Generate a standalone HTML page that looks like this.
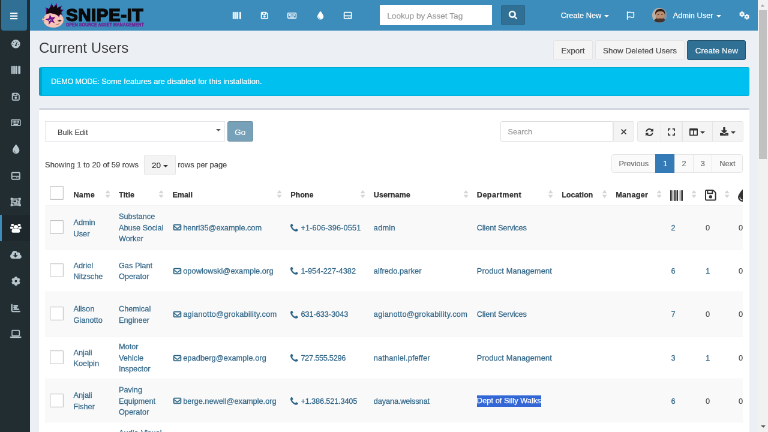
<!DOCTYPE html>
<html lang="en"><head><meta charset="utf-8"><title>Users :: Snipe-IT</title>
<style>
*{box-sizing:border-box}
html,body{margin:0;padding:0;overflow:hidden}
body{width:768px;height:432px;overflow:hidden;background:#ecf0f5;font-family:"Liberation Sans",sans-serif;}
#app{position:absolute;left:0;top:0;width:1280px;height:720px;transform:scale(.6);transform-origin:0 0;will-change:transform;overflow:hidden;background:#ecf0f5;color:#464646;font-size:12.8px;line-height:20px}
.abs{position:absolute}
.ai{position:absolute;display:block;line-height:0}
.ai svg,.ii svg{display:block}
.ii{display:inline-block;line-height:0;vertical-align:middle}
a{color:#296282;text-decoration:none}
/* sidebar */
#sidebar{position:absolute;left:0;top:0;width:50px;height:720px;background:#222d32;color:#b8c7ce}
#sidebar .active{position:absolute;left:0;top:358px;width:50px;height:44px;background:#1e282c;border-left:3px solid #3c8dbc}
#burger{position:absolute;left:1.8px;top:-3px;width:43px;height:54.3px;background:#307095;border-radius:4px;color:#f4f8fa}
/* navbar */
#navbar{position:absolute;left:50px;top:0;width:1213px;height:51px;background:#3c8dbc;color:#fff}
#logo{position:absolute;left:16.67px;top:0}
#lt1{left:60px;top:10.3px;font-size:29.5px;line-height:30px;font-weight:700;color:#0a0a0a;letter-spacing:.55px;white-space:nowrap;-webkit-text-stroke:1.7px #0a0a0a;paint-order:stroke fill}
#lt2{left:60px;top:36.4px;font-size:8.7px;line-height:10px;font-weight:700;color:#741a92;white-space:nowrap;transform:scaleX(.806);transform-origin:0 0;-webkit-text-stroke:.3px #741a92}
#lookup{position:absolute;left:582.7px;top:8px;width:187.5px;height:34px;background:#fff;color:#999;padding:0 0 0 12.5px;line-height:37px;font-size:13.7px;white-space:nowrap}
#lookbtn{position:absolute;left:784.5px;top:7.5px;width:40.5px;height:34px;background:#307095;border:1px solid #2a6487;border-radius:3px;color:#fff}
.navtxt{position:absolute;top:0;height:51px;line-height:52px;color:#fff;font-size:12.8px;white-space:nowrap;-webkit-text-stroke:.25px #fff}
.caret{display:inline-block;width:0;height:0;border-left:4px solid transparent;border-right:4px solid transparent;border-top:4px solid currentColor;vertical-align:middle;margin-left:5px}
#avatar{position:absolute;left:1036.6px;top:13.2px;width:24.6px;height:24.6px;border-radius:50%;overflow:hidden}
/* scrollbar */
#sb{position:absolute;left:1263.3px;top:0;width:16.7px;height:720px;background:#f1f1f1}
#sb .thumb{position:absolute;left:2px;top:17px;width:13px;height:247.5px;background:#c1c1c1}
#sb .up{position:absolute;left:4.7px;top:6.6px;width:0;height:0;border-left:3.8px solid transparent;border-right:3.8px solid transparent;border-bottom:4.4px solid #a6a6a6}
#sb .dn{position:absolute;left:4.9px;top:709.3px;width:0;height:0;border-left:4.2px solid transparent;border-right:4.2px solid transparent;border-top:4.9px solid #505050}
/* content */
h1{position:absolute;left:65px;top:63px;margin:0;font-size:24px;line-height:34px;font-weight:400;color:#3a3a3a;white-space:nowrap}
.btn{position:absolute;display:block;height:34px;line-height:34.5px;border:1px solid #e4e4e4;background:#f4f4f4;color:#4f4f4f;border-radius:3px;text-align:center;font-size:13.5px;white-space:nowrap}
.btn.primary{background:#307095;border-color:#23536f;color:#fff}
#alert{position:absolute;left:65px;top:111.5px;width:1183.5px;height:48px;background:#00c0ef;border:1px solid #00acd6;border-left:5px solid #00a3cb;border-radius:3px;color:#fff;line-height:46px;padding-left:15px;font-size:12.8px;white-space:nowrap}
#box{position:absolute;left:65px;top:179.5px;width:1183.5px;height:700px;background:#fff;border-top:3px solid #d2d6de;border-radius:3px}
.inp{position:absolute;height:34px;border:1px solid #e4e6eb;background:#fff;line-height:35.5px;font-size:12.8px;white-space:nowrap}
.pg{position:absolute;top:256.8px;height:31.5px;line-height:30.5px;border:1px solid #e6e6e6;background:#fafafa;color:#6a6a6a;text-align:center;font-size:12.8px}
.pg.act{background:#337ab7;border-color:#337ab7;color:#fff}
/* table */
#tw{position:absolute;left:75.4px;top:301.5px;width:1163px;height:440px;overflow:hidden}
table{border-collapse:collapse;table-layout:fixed;width:1260px;font-size:12.8px;line-height:18.57px}
th{height:40.5px;padding:0 8px 6.6px;text-align:left;font-weight:700;color:#333;position:relative;white-space:nowrap;vertical-align:bottom;font-size:12.7px}
td{padding:2.8px 8px 0;white-space:nowrap;vertical-align:middle;color:#333}
tr.o{background:#f9f9f9}
tbody tr{border-top:1px solid #f4f4f4}
.cb{display:block;width:23px;height:23px;border:1px solid #c6c6c6;background:#fff;box-shadow:inset 0 0 0 1px #f1f1f1;border-radius:1px}
th:first-child{vertical-align:top;padding:8px 8px 0}
.srt{position:absolute;right:7.1px;top:50%;margin-top:-4.5px;line-height:0}
.sel{background:#3367d6;color:#fff;padding:.9px 0 2.4px;position:relative;top:-.6px}
td .ii{margin-right:3px;position:relative;top:-1px}
.n1{position:relative;top:1px;display:inline-block}
td.ph .ii{margin-right:4.5px}
td.em .ii{margin-right:3.5px}
.btn.hb{height:33px;line-height:33.5px}
td{color:#4a4a4a}
td a{color:#35698b;-webkit-text-stroke:.28px #35698b}
td.em .ii{margin-left:1.3px;margin-right:3.4px}
th{-webkit-text-stroke:.25px #333}
td a.sel{color:#fff;-webkit-text-stroke:.25px #fff}
td .cb{position:relative;top:-1.9px}
td:nth-child(n+10){padding-left:9.3px}
th:nth-child(n+10) .srt{right:6.2px}
#app{-webkit-text-stroke-width:.2px}
h1{-webkit-text-stroke-width:0}

</style></head>
<body>
<div id="app">
 <div id="navbar">
  <svg id="logo" width="46.67" height="50" viewBox="40 0 28 30">
   <ellipse cx="53.2" cy="19.9" rx="10.1" ry="7.7" fill="#f8c4b6"/>
   <circle cx="43.6" cy="19.4" r="1.5" fill="#f8c4b6"/>
   <path fill="#6a1090" d="M46.20 13.80 L45.20 7.00 L48.60 9.40 L51.40 3.00 L53.00 7.80 L56.60 3.00 L57.00 8.20 L62.00 5.40 L60.00 9.60 L64.20 9.60 L61.00 12.00 L62.60 15.00 L59.90 14.30 L58.90 17.30 L57.00 15.00 L54.00 13.70 L50.00 13.10Z"/>
   <path fill="#120810" stroke="#120810" stroke-width="0.3" stroke-linejoin="round" d="M46.20 13.80 L47.00 7.87 L48.60 9.40 L52.09 4.88 L53.00 7.80 L56.12 4.94 L57.00 8.20 L60.45 6.66 L60.00 9.60 L62.24 9.98 L61.00 12.00 L60.76 14.21 L59.90 14.30 L57.69 15.71 L57.00 15.00 L54.00 13.70 L50.00 13.10Z"/>
   <path fill="#6a1090" d="M49.6 14.4 L51.5 17.6 L55.4 16.9 L52.8 19.9 L54.7 23.2 L51 21.8 L48.5 24.8 L48.6 20.9 L45.1 19.4 L48.8 18.2 Z"/>
   <ellipse cx="50.3" cy="20.3" rx="1.5" ry="0.8" fill="#d9cfd3"/>
   <ellipse cx="50.6" cy="20.5" rx="0.7" ry="0.6" fill="#2a1a22"/>
   <ellipse cx="59.4" cy="20.6" rx="1.9" ry="1" fill="#6b5a58"/>
   <ellipse cx="59.6" cy="20.5" rx="1" ry="0.7" fill="#2a2024"/>
   <path d="M55.4 24.8 Q57.5 24.8 59.2 23.6" stroke="#8a5a50" stroke-width="0.6" fill="none"/>
   <path d="M43.2 18.3 L44.2 17.4 M43.2 20.6 L44.2 21.4" stroke="#3a2a30" stroke-width="0.6" fill="none"/>
  </svg>
  <div class="abs" id="lt1">SNIPE-IT</div>
  <div class="abs" id="lt2">OPEN SOURCE ASSET MANAGEMENT</div>
  <span class="ai" style="left:338.00px;top:19.90px;width:13.60px;height:11.80px"><svg width="13.60" height="11.80" viewBox="0 32 512 448" preserveAspectRatio="none" fill="currentColor" stroke="currentColor" stroke-width="16.0" stroke-linejoin="round" overflow="visible"><path d="M24 32C10.7 32 0 42.7 0 56V456c0 13.3 10.7 24 24 24H40c13.3 0 24-10.7 24-24V56c0-13.3-10.7-24-24-24H24zm88 0c-8.8 0-16 7.2-16 16V464c0 8.8 7.2 16 16 16s16-7.2 16-16V48c0-8.8-7.2-16-16-16zm72 0c-13.3 0-24 10.7-24 24V456c0 13.3 10.7 24 24 24h16c13.3 0 24-10.7 24-24V56c0-13.3-10.7-24-24-24H184zm96 0c-13.3 0-24 10.7-24 24V456c0 13.3 10.7 24 24 24h16c13.3 0 24-10.7 24-24V56c0-13.3-10.7-24-24-24H280zM448 56V456c0 13.3 10.7 24 24 24h16c13.3 0 24-10.7 24-24V56c0-13.3-10.7-24-24-24H472c-13.3 0-24 10.7-24 24zm-64-8V464c0 8.8 7.2 16 16 16s16-7.2 16-16V48c0-8.8-7.2-16-16-16s-16 7.2-16 16z" /></svg></span>
  <span class="ai" style="left:385.10px;top:20.10px;width:11.60px;height:11.60px"><svg width="11.60" height="11.60" viewBox="0 32 448 448" preserveAspectRatio="none" fill="currentColor" stroke="currentColor" stroke-width="18.0" stroke-linejoin="round" overflow="visible"><path d="M48 96V416c0 8.800 7.200 16 16 16H384c8.800 0 16-7.200 16-16V170.500c0-4.200-1.700-8.300-4.700-11.300l33.900-33.900c12 12 18.700 28.300 18.700 45.300V416c0 35.300-28.700 64-64 64H64c-35.300 0-64-28.700-64-64V96C0 60.700 28.700 32 64 32H309.500c17 0 33.300 6.700 45.300 18.700l74.500 74.500-33.900 33.900L320.800 84.700c-.3-.3-.5-.5-.8-.8V184c0 13.300-10.700 24-24 24H104c-13.300 0-24-10.700-24-24V80H64c-8.800 0-16 7.200-16 16zm80-16v80H272V80H128zm32 240a64 64 0 1 1 128 0 64 64 0 1 1 -128 0z" /></svg></span>
  <span class="ai" style="left:429.40px;top:20.90px;width:15.20px;height:10.00px"><svg width="15.20" height="10.00" viewBox="0 64 576 384" preserveAspectRatio="none" fill="currentColor" stroke="currentColor" stroke-width="26.0" stroke-linejoin="round" overflow="visible"><path stroke="none" fill-rule="evenodd" d="M64 64H512a64 64 0 0 1 64 64V384a64 64 0 0 1-64 64H64a64 64 0 0 1-64-64V128a64 64 0 0 1 64-64zM64 118a10 10 0 0 0-10 10V384a10 10 0 0 0 10 10H512a10 10 0 0 0 10-10V128a10 10 0 0 0-10-10z"/><rect stroke="none" x="96" y="146" width="64" height="62" rx="12"/><rect stroke="none" x="176" y="146" width="64" height="62" rx="12"/><rect stroke="none" x="256" y="146" width="64" height="62" rx="12"/><rect stroke="none" x="336" y="146" width="64" height="62" rx="12"/><rect stroke="none" x="416" y="146" width="64" height="62" rx="12"/><rect stroke="none" x="96" y="226" width="64" height="62" rx="12"/><rect stroke="none" x="176" y="226" width="64" height="62" rx="12"/><rect stroke="none" x="256" y="226" width="64" height="62" rx="12"/><rect stroke="none" x="336" y="226" width="64" height="62" rx="12"/><rect stroke="none" x="416" y="226" width="64" height="62" rx="12"/><rect stroke="none" x="150" y="314" width="276" height="60" rx="12"/></svg></span>
  <span class="ai" style="left:478.60px;top:18.80px;width:10.20px;height:13.60px"><svg width="10.20" height="13.60" viewBox="0 0 384 512" preserveAspectRatio="none" fill="currentColor" stroke="currentColor" stroke-width="0.0" stroke-linejoin="round" overflow="visible"><path fill-rule="evenodd" d="M192 512C86 512 0 426 0 320C0 228.800 130.200 57.700 166.600 11.700C172.600 4.200 181.500 0 191.100 0h1.800c9.600 0 18.500 4.200 24.500 11.700C253.800 57.700 384 228.800 384 320c0 106-86 192-192 192zM96 336c0-8.800-7.200-16-16-16s-16 7.200-16 16c0 61.900 50.100 112 112 112c8.800 0 16-7.200 16-16s-7.200-16-16-16c-44.200 0-80-35.800-80-80z"/></svg></span>
  <span class="ai" style="left:523.00px;top:20.10px;width:13.40px;height:11.60px"><svg width="13.40" height="11.60" viewBox="0 32 512 448" preserveAspectRatio="none" fill="currentColor" stroke="currentColor" stroke-width="18.0" stroke-linejoin="round" overflow="visible"><path d="M64 80c-8.8 0-16 7.2-16 16V258c5.100-1.300 10.500-2 16-2H448c5.500 0 10.900 .7 16 2V96c0-8.800-7.200-16-16-16H64zM48 320v96c0 8.800 7.200 16 16 16H448c8.800 0 16-7.200 16-16V320c0-8.800-7.200-16-16-16H64c-8.800 0-16 7.200-16 16zM0 320V96C0 60.700 28.700 32 64 32H448c35.300 0 64 28.700 64 64V320v96c0 35.300-28.700 64-64 64H64c-35.300 0-64-28.700-64-64V320zm280 48a24 24 0 1 1 48 0 24 24 0 1 1 -48 0zm120-24a24 24 0 1 1 0 48 24 24 0 1 1 0-48z" /></svg></span>
  <div id="lookup">Lookup by Asset Tag</div>
  <div id="lookbtn"><span class="ai" style="left:12.50px;top:9.70px;width:13.80px;height:13.80px"><svg width="13.80" height="13.80" viewBox="0 -1408 1664 1664" preserveAspectRatio="none" overflow="visible"><path fill="currentColor" stroke="currentColor" stroke-width="50.0" stroke-linejoin="round" transform="scale(1,-1)" d="M1152 704q0 185 -131.5 316.5t-316.5 131.5t-316.5 -131.5t-131.5 -316.5t131.5 -316.5t316.5 -131.5t316.5 131.5t131.5 316.5zM1664 -128q0 -52 -38 -90t-90 -38q-54 0 -90 38l-343 342q-179 -124 -399 -124q-143 0 -273.5 55.5t-225 150t-150 225t-55.5 273.5
t55.5 273.5t150 225t225 150t273.5 55.5t273.5 -55.5t225 -150t150 -225t55.5 -273.5q0 -220 -124 -399l343 -343q37 -37 37 -90z"/></svg></span></div>
  <div class="navtxt" style="left:884.7px">Create New<span class="caret"></span></div>
  <span class="ai" style="left:995.00px;top:18.90px;width:12.00px;height:13.80px"><svg width="12.00" height="13.80" viewBox="0 0 448 512" preserveAspectRatio="none" fill="currentColor" stroke="currentColor" stroke-width="12.0" stroke-linejoin="round" overflow="visible"><path d="M48 24C48 10.7 37.3 0 24 0S0 10.7 0 24V64 350.500 400v88c0 13.300 10.700 24 24 24s24-10.700 24-24V388l80.300-20.100c41.100-10.300 84.600-5.500 122.500 13.400c44.200 22.100 95.500 24.800 141.700 7.400l34.700-13c12.500-4.700 20.800-16.600 20.800-30V66.100c0-23-24.200-38-44.800-27.700l-9.600 4.800c-46.300 23.200-100.800 23.200-147.100 0c-35.100-17.600-75.400-22-113.500-12.500L48 52V24zm0 77.500l96.600-24.200c27-6.700 55.500-3.600 80.400 8.800c54.900 27.400 118.700 29.700 175 6.800V334.700l-24.400 9.100c-33.700 12.600-71.200 10.700-103.400-5.400c-48.200-24.100-103.300-30.100-155.600-17.100L48 338.500v-237z" /></svg></span>
  <div id="avatar"><svg width="24.6" height="24.6" viewBox="0 0 25 25"><rect width="25" height="25" fill="#b9b0a8"/><rect x="15" width="10" height="25" fill="#8d8f98"/><path d="M2 25 Q3 19 8 18 L18 18 Q23 19 24 25Z" fill="#3b3030"/><ellipse cx="13.4" cy="12.4" rx="7.6" ry="9.6" fill="#bd8d70"/><path d="M5.2 12.5 Q4 2.2 13.4 1.8 Q22.8 2.2 21.6 12.5 Q20.6 7.6 17.5 6.4 Q13 5.2 9.2 6.6 Q6.2 8 5.2 12.5Z" fill="#2a1c17"/><path d="M6.6 16 Q8 22.6 13.4 22.6 Q18.8 22.6 20.2 16 Q18 19 16.4 18.2 Q13.4 17.2 10.4 18.2 Q8.8 19 6.6 16Z" fill="#4a342a"/><ellipse cx="10.3" cy="11.6" rx="1.3" ry=".7" fill="#3a2a24"/><ellipse cx="16.5" cy="11.6" rx="1.3" ry=".7" fill="#3a2a24"/></svg></div>
  <div class="navtxt" style="left:1071.7px">Admin User<span class="caret"></span></div>
  <span class="ai" style="left:1181.70px;top:19.05px;width:17.20px;height:13.50px"><svg width="17.20" height="13.50" viewBox="0 0 17.2 13.5" preserveAspectRatio="none" fill="currentColor" stroke="currentColor" stroke-width="0.0" stroke-linejoin="round" overflow="visible"><path stroke-width="0.5" stroke-linejoin="round" fill-rule="evenodd" d="M5.44 8.72 L3.76 8.72 L3.47 7.70 L2.39 7.09 L1.37 7.34 L0.53 5.88 L1.26 5.12 L1.26 3.88 L0.53 3.12 L1.37 1.66 L2.39 1.91 L3.47 1.30 L3.76 0.28 L5.44 0.28 L5.73 1.30 L6.81 1.91 L7.83 1.66 L8.67 3.12 L7.94 3.88 L7.94 5.12 L8.67 5.88 L7.83 7.34 L6.81 7.09 L5.73 7.70Z M6.10 4.50 A1.5 1.5 0 1 0 3.10 4.50 A1.5 1.5 0 1 0 6.10 4.50Z M13.54 13.22 L11.86 13.22 L11.57 12.20 L10.49 11.59 L9.47 11.84 L8.63 10.38 L9.36 9.62 L9.36 8.38 L8.63 7.62 L9.47 6.16 L10.49 6.41 L11.57 5.80 L11.86 4.78 L13.54 4.78 L13.83 5.80 L14.91 6.41 L15.93 6.16 L16.77 7.62 L16.04 8.38 L16.04 9.62 L16.77 10.38 L15.93 11.84 L14.91 11.59 L13.83 12.20Z M14.20 9.00 A1.5 1.5 0 1 0 11.20 9.00 A1.5 1.5 0 1 0 14.20 9.00Z"/></svg></span>
 </div>
 <div id="sidebar">
  <div class="active"></div>
  <div id="burger"><span class="ai" style="left:15.45px;top:23.60px;width:12.30px;height:11.20px"><svg width="12.30" height="11.20" viewBox="0 -1280 1536 1280" preserveAspectRatio="none" overflow="visible"><path fill="currentColor" stroke="currentColor" stroke-width="0.0" stroke-linejoin="round" transform="scale(1,-1)" d="M1536 192v-128q0 -26 -19 -45t-45 -19h-1408q-26 0 -45 19t-19 45v128q0 26 19 45t45 19h1408q26 0 45 -19t19 -45zM1536 704v-128q0 -26 -19 -45t-45 -19h-1408q-26 0 -45 19t-19 45v128q0 26 19 45t45 19h1408q26 0 45 -19t19 -45zM1536 1216v-128q0 -26 -19 -45
t-45 -19h-1408q-26 0 -45 19t-19 45v128q0 26 19 45t45 19h1408q26 0 45 -19t19 -45z"/></svg></span></div>
  <span class="ai" style="left:19.30px;top:65.70px;width:14.60px;height:14.60px"><svg width="14.60" height="14.60" viewBox="0 0 100 100" preserveAspectRatio="none" fill="currentColor" stroke="currentColor" stroke-width="0.0" stroke-linejoin="round" overflow="visible"><circle cx="50" cy="50" r="50" stroke="none"/><g stroke="#222d32" fill="#222d32"><circle cx="50" cy="66" r="10" stroke="none"/><path d="M50 66 L66 28" stroke-width="8" stroke-linecap="round" fill="none"/><circle cx="50" cy="19" r="5.5" stroke="none"/><circle cx="26" cy="31" r="5.5" stroke="none"/><circle cx="17" cy="56" r="5.5" stroke="none"/><circle cx="83" cy="56" r="5.5" stroke="none"/></g></svg></span>
  <span class="ai" style="left:19.00px;top:110.00px;width:14.80px;height:13.00px"><svg width="14.80" height="13.00" viewBox="0 32 512 448" preserveAspectRatio="none" fill="currentColor" stroke="currentColor" stroke-width="16.0" stroke-linejoin="round" overflow="visible"><path d="M24 32C10.7 32 0 42.7 0 56V456c0 13.3 10.7 24 24 24H40c13.3 0 24-10.7 24-24V56c0-13.3-10.7-24-24-24H24zm88 0c-8.8 0-16 7.2-16 16V464c0 8.8 7.2 16 16 16s16-7.2 16-16V48c0-8.8-7.2-16-16-16zm72 0c-13.3 0-24 10.7-24 24V456c0 13.3 10.7 24 24 24h16c13.3 0 24-10.7 24-24V56c0-13.3-10.7-24-24-24H184zm96 0c-13.3 0-24 10.7-24 24V456c0 13.3 10.7 24 24 24h16c13.3 0 24-10.7 24-24V56c0-13.3-10.7-24-24-24H280zM448 56V456c0 13.3 10.7 24 24 24h16c13.3 0 24-10.7 24-24V56c0-13.3-10.7-24-24-24H472c-13.3 0-24 10.7-24 24zm-64-8V464c0 8.8 7.2 16 16 16s16-7.2 16-16V48c0-8.8-7.2-16-16-16s-16 7.2-16 16z" /></svg></span>
  <span class="ai" style="left:20.30px;top:154.60px;width:12.60px;height:12.40px"><svg width="12.60" height="12.40" viewBox="0 32 448 448" preserveAspectRatio="none" fill="currentColor" stroke="currentColor" stroke-width="18.0" stroke-linejoin="round" overflow="visible"><path d="M48 96V416c0 8.800 7.200 16 16 16H384c8.800 0 16-7.200 16-16V170.500c0-4.200-1.700-8.300-4.700-11.300l33.900-33.900c12 12 18.700 28.300 18.700 45.300V416c0 35.300-28.700 64-64 64H64c-35.300 0-64-28.700-64-64V96C0 60.700 28.700 32 64 32H309.500c17 0 33.300 6.700 45.300 18.700l74.500 74.500-33.900 33.900L320.800 84.700c-.3-.3-.5-.5-.8-.8V184c0 13.300-10.700 24-24 24H104c-13.300 0-24-10.700-24-24V80H64c-8.800 0-16 7.200-16 16zm80-16v80H272V80H128zm32 240a64 64 0 1 1 128 0 64 64 0 1 1 -128 0z" /></svg></span>
  <span class="ai" style="left:18.10px;top:198.70px;width:16.60px;height:11.00px"><svg width="16.60" height="11.00" viewBox="0 64 576 384" preserveAspectRatio="none" fill="currentColor" stroke="currentColor" stroke-width="16.0" stroke-linejoin="round" overflow="visible"><path stroke="none" fill-rule="evenodd" d="M64 64H512a64 64 0 0 1 64 64V384a64 64 0 0 1-64 64H64a64 64 0 0 1-64-64V128a64 64 0 0 1 64-64zM64 118a10 10 0 0 0-10 10V384a10 10 0 0 0 10 10H512a10 10 0 0 0 10-10V128a10 10 0 0 0-10-10z"/><rect stroke="none" x="96" y="146" width="64" height="62" rx="12"/><rect stroke="none" x="176" y="146" width="64" height="62" rx="12"/><rect stroke="none" x="256" y="146" width="64" height="62" rx="12"/><rect stroke="none" x="336" y="146" width="64" height="62" rx="12"/><rect stroke="none" x="416" y="146" width="64" height="62" rx="12"/><rect stroke="none" x="96" y="226" width="64" height="62" rx="12"/><rect stroke="none" x="176" y="226" width="64" height="62" rx="12"/><rect stroke="none" x="256" y="226" width="64" height="62" rx="12"/><rect stroke="none" x="336" y="226" width="64" height="62" rx="12"/><rect stroke="none" x="416" y="226" width="64" height="62" rx="12"/><rect stroke="none" x="150" y="314" width="276" height="60" rx="12"/></svg></span>
  <span class="ai" style="left:20.70px;top:241.20px;width:11.40px;height:15.20px"><svg width="11.40" height="15.20" viewBox="0 0 384 512" preserveAspectRatio="none" fill="currentColor" stroke="currentColor" stroke-width="0.0" stroke-linejoin="round" overflow="visible"><path fill-rule="evenodd" d="M192 512C86 512 0 426 0 320C0 228.800 130.200 57.700 166.600 11.700C172.600 4.200 181.500 0 191.100 0h1.800c9.600 0 18.500 4.200 24.500 11.700C253.800 57.700 384 228.800 384 320c0 106-86 192-192 192zM96 336c0-8.800-7.200-16-16-16s-16 7.200-16 16c0 61.900 50.100 112 112 112c8.800 0 16-7.200 16-16s-7.200-16-16-16c-44.200 0-80-35.800-80-80z"/></svg></span>
  <span class="ai" style="left:19.20px;top:286.60px;width:14.60px;height:12.40px"><svg width="14.60" height="12.40" viewBox="0 32 512 448" preserveAspectRatio="none" fill="currentColor" stroke="currentColor" stroke-width="18.0" stroke-linejoin="round" overflow="visible"><path d="M64 80c-8.8 0-16 7.2-16 16V258c5.100-1.300 10.500-2 16-2H448c5.500 0 10.900 .7 16 2V96c0-8.800-7.200-16-16-16H64zM48 320v96c0 8.800 7.200 16 16 16H448c8.800 0 16-7.200 16-16V320c0-8.800-7.200-16-16-16H64c-8.800 0-16 7.200-16 16zM0 320V96C0 60.700 28.700 32 64 32H448c35.300 0 64 28.700 64 64V320v96c0 35.300-28.700 64-64 64H64c-35.300 0-64-28.700-64-64V320zm280 48a24 24 0 1 1 48 0 24 24 0 1 1 -48 0zm120-24a24 24 0 1 1 0 48 24 24 0 1 1 0-48z" /></svg></span>
  <span class="ai" style="left:18.20px;top:330.10px;width:16.40px;height:13.20px"><svg width="16.40" height="13.20" viewBox="0 -1536 2048 1792" preserveAspectRatio="none" overflow="visible"><path fill="currentColor" stroke="currentColor" stroke-width="90.0" stroke-linejoin="round" transform="scale(1,-1)" d="M2048 1152h-128v-1024h128v-384h-384v128h-1280v-128h-384v384h128v1024h-128v384h384v-128h1280v128h384v-384zM1792 1408v-128h128v128h-128zM128 1408v-128h128v128h-128zM256 -128v128h-128v-128h128zM1664 0v128h128v1024h-128v128h-1280v-128h-128v-1024h128v-128
h1280zM1920 -128v128h-128v-128h128zM1280 896h384v-768h-896v256h-384v768h896v-256zM512 512h640v512h-640v-512zM1536 256v512h-256v-384h-384v-128h640z"/></svg></span>
  <span class="ai" style="left:16.90px;top:373.30px;width:18.80px;height:14.80px"><svg width="18.80" height="14.80" viewBox="0 -1536 1920 1792" preserveAspectRatio="none" overflow="visible"><path fill="#fff" stroke="#fff" stroke-width="0.0" stroke-linejoin="round" transform="scale(1,-1)" d="M593 640q-162 -5 -265 -128h-134q-82 0 -138 40.5t-56 118.5q0 353 124 353q6 0 43.5 -21t97.5 -42.5t119 -21.5q67 0 133 23q-5 -37 -5 -66q0 -139 81 -256zM1664 3q0 -120 -73 -189.5t-194 -69.5h-874q-121 0 -194 69.5t-73 189.5q0 53 3.5 103.5t14 109t26.5 108.5
t43 97.5t62 81t85.5 53.5t111.5 20q10 0 43 -21.5t73 -48t107 -48t135 -21.5t135 21.5t107 48t73 48t43 21.5q61 0 111.5 -20t85.5 -53.5t62 -81t43 -97.5t26.5 -108.5t14 -109t3.5 -103.5zM640 1280q0 -106 -75 -181t-181 -75t-181 75t-75 181t75 181t181 75t181 -75
t75 -181zM1344 896q0 -159 -112.5 -271.5t-271.5 -112.5t-271.5 112.5t-112.5 271.5t112.5 271.5t271.5 112.5t271.5 -112.5t112.5 -271.5zM1920 671q0 -78 -56 -118.5t-138 -40.5h-134q-103 123 -265 128q81 117 81 256q0 29 -5 66q66 -23 133 -23q59 0 119 21.5t97.5 42.5
t43.5 21q124 0 124 -353zM1792 1280q0 -106 -75 -181t-181 -75t-181 75t-75 181t75 181t181 75t181 -75t75 -181z"/></svg></span>
  <span class="ai" style="left:16.90px;top:418.15px;width:18.80px;height:13.30px"><svg width="18.80" height="13.30" viewBox="0 -1408 1920 1408" preserveAspectRatio="none" overflow="visible"><path fill="currentColor" stroke="currentColor" stroke-width="0.0" stroke-linejoin="round" transform="scale(1,-1)" d="M1280 608q0 14 -9 23t-23 9h-224v352q0 13 -9.5 22.5t-22.5 9.5h-192q-13 0 -22.5 -9.5t-9.5 -22.5v-352h-224q-13 0 -22.5 -9.5t-9.5 -22.5q0 -14 9 -23l352 -352q9 -9 23 -9t23 9l351 351q10 12 10 24zM1920 384q0 -159 -112.5 -271.5t-271.5 -112.5h-1088
q-185 0 -316.5 131.5t-131.5 316.5q0 130 70 240t188 165q-2 30 -2 43q0 212 150 362t362 150q156 0 285.5 -87t188.5 -231q71 62 166 62q106 0 181 -75t75 -181q0 -76 -41 -138q130 -31 213.5 -135.5t83.5 -238.5z"/></svg></span>
  <span class="ai" style="left:18.90px;top:461.10px;width:15.00px;height:15.20px"><svg width="15.00" height="15.20" viewBox="0 0 16 16" preserveAspectRatio="none" fill="currentColor" stroke="currentColor" stroke-width="0.0" stroke-linejoin="round" overflow="visible"><path stroke-width="0.8" stroke-linejoin="round" fill-rule="evenodd" d="M9.63 15.42 L6.37 15.42 L5.81 13.58 L4.26 12.69 L2.39 13.12 L0.76 10.30 L2.07 8.89 L2.07 7.11 L0.76 5.70 L2.39 2.88 L4.26 3.31 L5.81 2.42 L6.37 0.58 L9.63 0.58 L10.19 2.42 L11.74 3.31 L13.61 2.88 L15.24 5.70 L13.93 7.11 L13.93 8.89 L15.24 10.30 L13.61 13.12 L11.74 12.69 L10.19 13.58Z M10.60 8.00 A2.6 2.6 0 1 0 5.40 8.00 A2.6 2.6 0 1 0 10.60 8.00Z"/></svg></span>
  <span class="ai" style="left:19.20px;top:506.60px;width:14.60px;height:12.80px"><svg width="14.60" height="12.80" viewBox="0 32 512 448" preserveAspectRatio="none" fill="currentColor" stroke="currentColor" stroke-width="34.0" stroke-linejoin="round" overflow="visible"><path d="M24 32c13.3 0 24 10.7 24 24V408c0 13.3 10.7 24 24 24H488c13.3 0 24 10.7 24 24s-10.7 24-24 24H72c-39.8 0-72-32.2-72-72V56C0 42.700 10.700 32 24 32zM128 136c0-13.300 10.700-24 24-24l208 0c13.300 0 24 10.700 24 24s-10.700 24-24 24l-208 0c-13.300 0-24-10.700-24-24zm24 72H296c13.300 0 24 10.700 24 24s-10.700 24-24 24H152c-13.300 0-24-10.700-24-24s10.700-24 24-24zm0 96H424c13.300 0 24 10.700 24 24s-10.700 24-24 24H152c-13.300 0-24-10.700-24-24s10.700-24 24-24z" /></svg></span>
  <span class="ai" style="left:17.10px;top:550.20px;width:18.40px;height:13.00px"><svg width="18.40" height="13.00" viewBox="0 -1280 1920 1280" preserveAspectRatio="none" overflow="visible"><path fill="currentColor" stroke="currentColor" stroke-width="40.0" stroke-linejoin="round" transform="scale(1,-1)" d="M416 256q-66 0 -113 47t-47 113v704q0 66 47 113t113 47h1088q66 0 113 -47t47 -113v-704q0 -66 -47 -113t-113 -47h-1088zM384 1120v-704q0 -13 9.5 -22.5t22.5 -9.5h1088q13 0 22.5 9.5t9.5 22.5v704q0 13 -9.5 22.5t-22.5 9.5h-1088q-13 0 -22.5 -9.5t-9.5 -22.5z
M1760 192h160v-96q0 -40 -47 -68t-113 -28h-1600q-66 0 -113 28t-47 68v96h160h1600zM1040 96q16 0 16 16t-16 16h-160q-16 0 -16 -16t16 -16h160z"/></svg></span>
 </div>
 <h1>Current Users</h1>
 <a class="btn hb" style="left:922.2px;top:66.8px;width:65.6px">Export</a>
 <a class="btn hb" style="left:992.2px;top:66.8px;width:148.6px">Show Deleted Users</a>
 <a class="btn primary hb" style="left:1145.4px;top:66.8px;width:98.1px">Create New</a>
 <div id="alert"><span><span style="letter-spacing:-0.324px">DEMO MODE:</span></span><span><span style="letter-spacing:0.025px"> Some features are disabled for this installation.</span></span></div>
 <div id="box"></div>
 <div class="inp" style="left:75px;top:202px;width:300px;padding-left:20px;color:#444">Bulk Edit<span class="caret" style="position:absolute;right:5.6px;top:12px;color:#5a5a5a;border-left-width:4.2px;border-right-width:4.2px;border-top-width:4.6px"></span></div>
 <a class="btn primary" style="left:378.7px;top:202.1px;width:43.2px;height:34px;line-height:35.6px;opacity:.65">Go</a>
 <div class="abs" style="left:75px;top:265px;line-height:20px;white-space:nowrap;font-size:12.95px">Showing 1 to 20 of 59 rows</div>
 <a class="btn" style="left:239.6px;top:258.3px;width:53.7px;color:#333">20<span class="caret" style="margin-left:4px"></span></a>
 <div class="abs" style="left:296.3px;top:265px;line-height:20px;white-space:nowrap;font-size:12.95px">rows per page</div>
 <div class="inp" style="left:833.5px;top:202.3px;width:188.5px;padding-left:12px;color:#999;border-radius:3px 0 0 3px;line-height:33.4px;border-color:#dedede">Search</div>
 <a class="btn" style="left:1021.6px;top:202.3px;width:35.6px;border-radius:0 3px 3px 0"><span class="ai" style="left:12.40px;top:11.70px;width:9.20px;height:9.20px"><svg width="9.20" height="9.20" viewBox="0 0 10 10" preserveAspectRatio="none" fill="#3a3a3a" stroke="#3a3a3a" stroke-width="0.0" stroke-linejoin="round" overflow="visible"><path fill="none" stroke-width="1.9" stroke-linecap="round" d="M1.2 1.2 L8.8 8.8 M8.8 1.2 L1.2 8.8"/></svg></span></a>
 <a class="btn" style="left:1062.2px;top:202.3px;width:39.5px;border-radius:3px 0 0 3px"><span class="ai" style="left:12.40px;top:10.50px;width:12.80px;height:12.80px"><svg width="12.80" height="12.80" viewBox="0 -1408 1536 1536" preserveAspectRatio="none" overflow="visible"><path fill="#333" stroke="#333" stroke-width="0.0" stroke-linejoin="round" transform="scale(1,-1)" d="M1511 480q0 -5 -1 -7q-64 -268 -268 -434.5t-478 -166.5q-146 0 -282.5 55t-243.5 157l-129 -129q-19 -19 -45 -19t-45 19t-19 45v448q0 26 19 45t45 19h448q26 0 45 -19t19 -45t-19 -45l-137 -137q71 -66 161 -102t187 -36q134 0 250 65t186 179q11 17 53 117
q8 23 30 23h192q13 0 22.5 -9.5t9.5 -22.5zM1536 1280v-448q0 -26 -19 -45t-45 -19h-448q-26 0 -45 19t-19 45t19 45l138 138q-148 137 -349 137q-134 0 -250 -65t-186 -179q-11 -17 -53 -117q-8 -23 -30 -23h-199q-13 0 -22.5 9.5t-9.5 22.5v7q65 268 270 434.5t480 166.5
q146 0 284 -55.5t245 -156.5l130 129q19 19 45 19t45 -19t19 -45z"/></svg></span></a>
 <a class="btn" style="left:1100.7px;top:202.3px;width:36.8px;border-radius:0"><span class="ai" style="left:11.80px;top:10.70px;width:12.00px;height:12.00px"><svg width="12.00" height="12.00" viewBox="0 32 448 448" preserveAspectRatio="none" fill="#333" stroke="#333" stroke-width="0.0" stroke-linejoin="round" overflow="visible"><path d="M0 180V56c0-13.3 10.7-24 24-24h124c6.6 0 12 5.4 12 12v40c0 6.6-5.4 12-12 12H64v84c0 6.6-5.4 12-12 12H12c-6.6 0-12-5.4-12-12zM288 44v40c0 6.6 5.4 12 12 12h84v84c0 6.6 5.4 12 12 12h40c6.6 0 12-5.4 12-12V56c0-13.3-10.7-24-24-24H300c-6.6 0-12 5.4-12 12zm148 276h-40c-6.6 0-12 5.4-12 12v84h-84c-6.6 0-12 5.4-12 12v40c0 6.6 5.4 12 12 12h124c13.3 0 24-10.7 24-24V332c0-6.6-5.4-12-12-12zM160 468v-40c0-6.6-5.4-12-12-12H64v-84c0-6.6-5.4-12-12-12H12c-6.6 0-12 5.4-12 12v124c0 13.3 10.7 24 24 24h124c6.6 0 12-5.4 12-12z" /></svg></span></a>
 <a class="btn" style="left:1136.5px;top:202.3px;width:51px;border-radius:0"><span class="ai" style="left:11.60px;top:10.48px;width:14.00px;height:12.25px"><svg width="14.00" height="12.25" viewBox="0 32 512 448" preserveAspectRatio="none" fill="#333" stroke="#333" stroke-width="0.0" stroke-linejoin="round" overflow="visible"><path d="M464 32H48C21.49 32 0 53.49 0 80v352c0 26.51 21.49 48 48 48h416c26.51 0 48-21.49 48-48V80c0-26.51-21.49-48-48-48zM224 416H64V160h160v256zm224 0H288V160h160v256z" /></svg></span><span class="caret" style="position:absolute;left:24.8px;top:15.8px;color:#333"></span></a>
 <a class="btn" style="left:1186.5px;top:202.3px;width:52px;border-radius:0 3px 3px 0"><span class="ai" style="left:12.40px;top:8.80px;width:14.00px;height:14.00px"><svg width="14.00" height="14.00" viewBox="0 0 512 512" preserveAspectRatio="none" fill="#333" stroke="#333" stroke-width="0.0" stroke-linejoin="round" overflow="visible"><path d="M216 0h80c13.3 0 24 10.7 24 24v168h87.7c17.8 0 26.7 21.5 14.1 34.1L269.7 378.3c-7.5 7.5-19.8 7.5-27.3 0L90.1 226.1c-12.6-12.6-3.7-34.1 14.1-34.1H192V24c0-13.3 10.7-24 24-24zm296 376v112c0 13.3-10.7 24-24 24H24c-13.3 0-24-10.7-24-24V376c0-13.3 10.7-24 24-24h146.7l49 49c20.1 20.1 52.5 20.1 72.6 0l49-49H488c13.3 0 24 10.7 24 24zm-124 88c0-11-9-20-20-20s-20 9-20 20 9 20 20 20 20-9 20-20zm64 0c0-11-9-20-20-20s-20 9-20 20 9 20 20 20 20-9 20-20z" /></svg></span><span class="caret" style="position:absolute;left:25.6px;top:15.8px;color:#333"></span></a>
 <div class="pg" style="left:1019.3px;width:74px;border-radius:4px 0 0 4px">Previous</div>
 <div class="pg act" style="left:1092.3px;width:33.2px">1</div>
 <div class="pg" style="left:1123.8px;width:32.5px">2</div>
 <div class="pg" style="left:1155.3px;width:32px">3</div>
 <div class="pg" style="left:1186.3px;width:52.2px;border-radius:0 4px 4px 0">Next</div>
 <div id="tw">
 <table>
  <colgroup><col style="width:39px"><col style="width:75.5px"><col style="width:89.6px"><col style="width:196.7px"><col style="width:138.7px"><col style="width:172px"><col style="width:141.3px"><col style="width:90px"><col style="width:91px"><col style="width:57.5px"><col style="width:55px"><col style="width:60px"><col></colgroup>
  <thead><tr>
   <th><span class="cb"></span></th>
   <th><span style="letter-spacing:0.318px">Name</span><span class="srt"><span class="ii" style="width:7.20px;height:13.00px;"><svg width="7.20" height="13.00" viewBox="0 -1344 1024 1408" preserveAspectRatio="none" overflow="visible"><path fill="#d6d6d6" stroke="#d6d6d6" stroke-width="0.0" stroke-linejoin="round" transform="scale(1,-1)" d="M1024 448q0 -26 -19 -45l-448 -448q-19 -19 -45 -19t-45 19l-448 448q-19 19 -19 45t19 45t45 19h896q26 0 45 -19t19 -45zM1024 832q0 -26 -19 -45t-45 -19h-896q-26 0 -45 19t-19 45t19 45l448 448q19 19 45 19t45 -19l448 -448q19 -19 19 -45z"/></svg></span></span></th>
   <th><span style="letter-spacing:0.078px">Title</span><span class="srt"><span class="ii" style="width:7.20px;height:13.00px;"><svg width="7.20" height="13.00" viewBox="0 -1344 1024 1408" preserveAspectRatio="none" overflow="visible"><path fill="#d6d6d6" stroke="#d6d6d6" stroke-width="0.0" stroke-linejoin="round" transform="scale(1,-1)" d="M1024 448q0 -26 -19 -45l-448 -448q-19 -19 -45 -19t-45 19l-448 448q-19 19 -19 45t19 45t45 19h896q26 0 45 -19t19 -45zM1024 832q0 -26 -19 -45t-45 -19h-896q-26 0 -45 19t-19 45t19 45l448 448q19 19 45 19t45 -19l448 -448q19 -19 19 -45z"/></svg></span></span></th>
   <th><span style="letter-spacing:-0.105px">Email</span><span class="srt"><span class="ii" style="width:7.20px;height:13.00px;"><svg width="7.20" height="13.00" viewBox="0 -1344 1024 1408" preserveAspectRatio="none" overflow="visible"><path fill="#d6d6d6" stroke="#d6d6d6" stroke-width="0.0" stroke-linejoin="round" transform="scale(1,-1)" d="M1024 448q0 -26 -19 -45l-448 -448q-19 -19 -45 -19t-45 19l-448 448q-19 19 -19 45t19 45t45 19h896q26 0 45 -19t19 -45zM1024 832q0 -26 -19 -45t-45 -19h-896q-26 0 -45 19t-19 45t19 45l448 448q19 19 45 19t45 -19l448 -448q19 -19 19 -45z"/></svg></span></span></th>
   <th><span style="letter-spacing:-0.09px">Phone</span><span class="srt"><span class="ii" style="width:7.20px;height:13.00px;"><svg width="7.20" height="13.00" viewBox="0 -1344 1024 1408" preserveAspectRatio="none" overflow="visible"><path fill="#d6d6d6" stroke="#d6d6d6" stroke-width="0.0" stroke-linejoin="round" transform="scale(1,-1)" d="M1024 448q0 -26 -19 -45l-448 -448q-19 -19 -45 -19t-45 19l-448 448q-19 19 -19 45t19 45t45 19h896q26 0 45 -19t19 -45zM1024 832q0 -26 -19 -45t-45 -19h-896q-26 0 -45 19t-19 45t19 45l448 448q19 19 45 19t45 -19l448 -448q19 -19 19 -45z"/></svg></span></span></th>
   <th><span style="letter-spacing:-0.066px">Username</span><span class="srt"><span class="ii" style="width:7.20px;height:13.00px;"><svg width="7.20" height="13.00" viewBox="0 -1344 1024 1408" preserveAspectRatio="none" overflow="visible"><path fill="#d6d6d6" stroke="#d6d6d6" stroke-width="0.0" stroke-linejoin="round" transform="scale(1,-1)" d="M1024 448q0 -26 -19 -45l-448 -448q-19 -19 -45 -19t-45 19l-448 448q-19 19 -19 45t19 45t45 19h896q26 0 45 -19t19 -45zM1024 832q0 -26 -19 -45t-45 -19h-896q-26 0 -45 19t-19 45t19 45l448 448q19 19 45 19t45 -19l448 -448q19 -19 19 -45z"/></svg></span></span></th>
   <th><span style="letter-spacing:0.367px">Department</span><span class="srt"><span class="ii" style="width:7.20px;height:13.00px;"><svg width="7.20" height="13.00" viewBox="0 -1344 1024 1408" preserveAspectRatio="none" overflow="visible"><path fill="#d6d6d6" stroke="#d6d6d6" stroke-width="0.0" stroke-linejoin="round" transform="scale(1,-1)" d="M1024 448q0 -26 -19 -45l-448 -448q-19 -19 -45 -19t-45 19l-448 448q-19 19 -19 45t19 45t45 19h896q26 0 45 -19t19 -45zM1024 832q0 -26 -19 -45t-45 -19h-896q-26 0 -45 19t-19 45t19 45l448 448q19 19 45 19t45 -19l448 -448q19 -19 19 -45z"/></svg></span></span></th>
   <th><span style="letter-spacing:-0.099px">Location</span><span class="srt"><span class="ii" style="width:7.20px;height:13.00px;"><svg width="7.20" height="13.00" viewBox="0 -1344 1024 1408" preserveAspectRatio="none" overflow="visible"><path fill="#d6d6d6" stroke="#d6d6d6" stroke-width="0.0" stroke-linejoin="round" transform="scale(1,-1)" d="M1024 448q0 -26 -19 -45l-448 -448q-19 -19 -45 -19t-45 19l-448 448q-19 19 -19 45t19 45t45 19h896q26 0 45 -19t19 -45zM1024 832q0 -26 -19 -45t-45 -19h-896q-26 0 -45 19t-19 45t19 45l448 448q19 19 45 19t45 -19l448 -448q19 -19 19 -45z"/></svg></span></span></th>
   <th><span style="letter-spacing:0.283px">Manager</span><span class="srt"><span class="ii" style="width:7.20px;height:13.00px;"><svg width="7.20" height="13.00" viewBox="0 -1344 1024 1408" preserveAspectRatio="none" overflow="visible"><path fill="#d6d6d6" stroke="#d6d6d6" stroke-width="0.0" stroke-linejoin="round" transform="scale(1,-1)" d="M1024 448q0 -26 -19 -45l-448 -448q-19 -19 -45 -19t-45 19l-448 448q-19 19 -19 45t19 45t45 19h896q26 0 45 -19t19 -45zM1024 832q0 -26 -19 -45t-45 -19h-896q-26 0 -45 19t-19 45t19 45l448 448q19 19 45 19t45 -19l448 -448q19 -19 19 -45z"/></svg></span></span></th>
   <th><span class="ii" style="width:21.00px;height:18.00px;"><svg width="21.00" height="18.00" viewBox="0 32 512 448" preserveAspectRatio="none" fill="#333" stroke="#333" stroke-width="0.0" stroke-linejoin="round" overflow="visible"><path d="M24 32C10.7 32 0 42.7 0 56V456c0 13.3 10.7 24 24 24H40c13.3 0 24-10.7 24-24V56c0-13.3-10.7-24-24-24H24zm88 0c-8.8 0-16 7.2-16 16V464c0 8.8 7.2 16 16 16s16-7.2 16-16V48c0-8.8-7.2-16-16-16zm72 0c-13.3 0-24 10.7-24 24V456c0 13.3 10.7 24 24 24h16c13.3 0 24-10.7 24-24V56c0-13.3-10.7-24-24-24H184zm96 0c-13.3 0-24 10.7-24 24V456c0 13.3 10.7 24 24 24h16c13.3 0 24-10.7 24-24V56c0-13.3-10.7-24-24-24H280zM448 56V456c0 13.3 10.7 24 24 24h16c13.3 0 24-10.7 24-24V56c0-13.3-10.7-24-24-24H472c-13.3 0-24 10.7-24 24zm-64-8V464c0 8.8 7.2 16 16 16s16-7.2 16-16V48c0-8.8-7.2-16-16-16s-16 7.2-16 16z" /></svg></span><span class="srt"><span class="ii" style="width:7.20px;height:13.00px;"><svg width="7.20" height="13.00" viewBox="0 -1344 1024 1408" preserveAspectRatio="none" overflow="visible"><path fill="#d6d6d6" stroke="#d6d6d6" stroke-width="0.0" stroke-linejoin="round" transform="scale(1,-1)" d="M1024 448q0 -26 -19 -45l-448 -448q-19 -19 -45 -19t-45 19l-448 448q-19 19 -19 45t19 45t45 19h896q26 0 45 -19t19 -45zM1024 832q0 -26 -19 -45t-45 -19h-896q-26 0 -45 19t-19 45t19 45l448 448q19 19 45 19t45 -19l448 -448q19 -19 19 -45z"/></svg></span></span></th>
   <th><span class="ii" style="width:18.60px;height:18.60px;"><svg width="18.60" height="18.60" viewBox="0 32 448 448" preserveAspectRatio="none" fill="#333" stroke="#333" stroke-width="0.0" stroke-linejoin="round" overflow="visible"><path d="M48 96V416c0 8.800 7.200 16 16 16H384c8.800 0 16-7.200 16-16V170.500c0-4.200-1.700-8.300-4.700-11.300l33.900-33.900c12 12 18.700 28.300 18.700 45.300V416c0 35.300-28.700 64-64 64H64c-35.300 0-64-28.700-64-64V96C0 60.700 28.700 32 64 32H309.500c17 0 33.300 6.700 45.300 18.700l74.500 74.500-33.900 33.900L320.800 84.700c-.3-.3-.5-.5-.8-.8V184c0 13.300-10.700 24-24 24H104c-13.300 0-24-10.700-24-24V80H64c-8.800 0-16 7.200-16 16zm80-16v80H272V80H128zm32 240a64 64 0 1 1 128 0 64 64 0 1 1 -128 0z" /></svg></span><span class="srt"><span class="ii" style="width:7.20px;height:13.00px;"><svg width="7.20" height="13.00" viewBox="0 -1344 1024 1408" preserveAspectRatio="none" overflow="visible"><path fill="#d6d6d6" stroke="#d6d6d6" stroke-width="0.0" stroke-linejoin="round" transform="scale(1,-1)" d="M1024 448q0 -26 -19 -45l-448 -448q-19 -19 -45 -19t-45 19l-448 448q-19 19 -19 45t19 45t45 19h896q26 0 45 -19t19 -45zM1024 832q0 -26 -19 -45t-45 -19h-896q-26 0 -45 19t-19 45t19 45l448 448q19 19 45 19t45 -19l448 -448q19 -19 19 -45z"/></svg></span></span></th>
   <th><span class="ii" style="width:15.50px;height:20.20px;position:relative;top:1.4px"><svg width="15.50" height="20.20" viewBox="0 0 384 512" preserveAspectRatio="none" fill="#333" stroke="#333" stroke-width="0.0" stroke-linejoin="round" overflow="visible"><path fill-rule="evenodd" d="M192 512C86 512 0 426 0 320C0 228.800 130.200 57.700 166.600 11.700C172.600 4.200 181.500 0 191.100 0h1.800c9.600 0 18.500 4.200 24.500 11.700C253.800 57.700 384 228.800 384 320c0 106-86 192-192 192zM96 336c0-8.800-7.200-16-16-16s-16 7.200-16 16c0 61.900 50.100 112 112 112c8.800 0 16-7.200 16-16s-7.200-16-16-16c-44.200 0-80-35.800-80-80z"/></svg></span></th>
   <th></th>
  </tr></thead>
  <tbody>
   <tr class="o" style="height:73.2px"><td><span class="cb"></span></td><td><a class="n1">Admin<br>User</a></td><td><a>Substance<br>Abuse Social<br>Worker</a></td><td class="em"><a><span class="ii" style="width:13.00px;height:9.80px;"><svg width="13.00" height="9.80" viewBox="0 64 512 384" preserveAspectRatio="none" fill="#2d6687" stroke="#2d6687" stroke-width="22.0" stroke-linejoin="round" overflow="visible"><path d="M64 112c-8.800 0-16 7.200-16 16v22.100L220.500 291.700c20.700 17 50.400 17 71.100 0L464 150.100V128c0-8.800-7.200-16-16-16H64zM48 212.200V384c0 8.800 7.200 16 16 16H448c8.800 0 16-7.200 16-16V212.200L322 328.800c-38.400 31.500-93.700 31.500-132 0L48 212.200zM0 128C0 92.700 28.700 64 64 64H448c35.300 0 64 28.700 64 64V384c0 35.300-28.700 64-64 64H64c-35.300 0-64-28.700-64-64V128z" /></svg></span><span style="letter-spacing:-0.05px">henri35@example.com</span></a></td><td class="ph"><a><span class="ii" style="width:12.80px;height:12.80px;"><svg width="12.80" height="12.80" viewBox="0 -1408 1408 1408" preserveAspectRatio="none" overflow="visible"><path fill="#2d6687" stroke="#2d6687" stroke-width="0.0" stroke-linejoin="round" transform="scale(1,-1)" d="M1408 296q0 -27 -10 -70.5t-21 -68.5q-21 -50 -122 -106q-94 -51 -186 -51q-27 0 -53 3.5t-57.5 12.5t-47 14.5t-55.5 20.5t-49 18q-98 35 -175 83q-127 79 -264 216t-216 264q-48 77 -83 175q-3 9 -18 49t-20.5 55.5t-14.5 47t-12.5 57.5t-3.5 53q0 92 51 186
q56 101 106 122q25 11 68.5 21t70.5 10q14 0 21 -3q18 -6 53 -76q11 -19 30 -54t35 -63.5t31 -53.5q3 -4 17.5 -25t21.5 -35.5t7 -28.5q0 -20 -28.5 -50t-62 -55t-62 -53t-28.5 -46q0 -9 5 -22.5t8.5 -20.5t14 -24t11.5 -19q76 -137 174 -235t235 -174q2 -1 19 -11.5t24 -14
t20.5 -8.5t22.5 -5q18 0 46 28.5t53 62t55 62t50 28.5q14 0 28.5 -7t35.5 -21.5t25 -17.5q25 -15 53.5 -31t63.5 -35t54 -30q70 -35 76 -53q3 -7 3 -21z"/></svg></span><span style="letter-spacing:0.097px">+1-606-396-0551</span></a></td><td><a><span style="letter-spacing:0.195px">admin</span></a></td><td><a><span style="letter-spacing:-0.162px">Client Services</span></a></td><td></td><td></td><td><a>2</a></td><td>0</td><td>0</td><td></td></tr>
   <tr style="height:71.3px"><td><span class="cb"></span></td><td><a>Adriel<br>Nitzsche</a></td><td><a>Gas Plant<br>Operator</a></td><td class="em"><a><span class="ii" style="width:13.00px;height:9.80px;"><svg width="13.00" height="9.80" viewBox="0 64 512 384" preserveAspectRatio="none" fill="#2d6687" stroke="#2d6687" stroke-width="22.0" stroke-linejoin="round" overflow="visible"><path d="M64 112c-8.800 0-16 7.200-16 16v22.100L220.500 291.700c20.700 17 50.400 17 71.100 0L464 150.100V128c0-8.800-7.200-16-16-16H64zM48 212.200V384c0 8.800 7.200 16 16 16H448c8.800 0 16-7.200 16-16V212.200L322 328.800c-38.400 31.500-93.700 31.500-132 0L48 212.200zM0 128C0 92.700 28.700 64 64 64H448c35.300 0 64 28.700 64 64V384c0 35.300-28.700 64-64 64H64c-35.300 0-64-28.700-64-64V128z" /></svg></span><span style="letter-spacing:0.071px">opowlowski@example.org</span></a></td><td class="ph"><a><span class="ii" style="width:12.80px;height:12.80px;"><svg width="12.80" height="12.80" viewBox="0 -1408 1408 1408" preserveAspectRatio="none" overflow="visible"><path fill="#2d6687" stroke="#2d6687" stroke-width="0.0" stroke-linejoin="round" transform="scale(1,-1)" d="M1408 296q0 -27 -10 -70.5t-21 -68.5q-21 -50 -122 -106q-94 -51 -186 -51q-27 0 -53 3.5t-57.5 12.5t-47 14.5t-55.5 20.5t-49 18q-98 35 -175 83q-127 79 -264 216t-216 264q-48 77 -83 175q-3 9 -18 49t-20.5 55.5t-14.5 47t-12.5 57.5t-3.5 53q0 92 51 186
q56 101 106 122q25 11 68.5 21t70.5 10q14 0 21 -3q18 -6 53 -76q11 -19 30 -54t35 -63.5t31 -53.5q3 -4 17.5 -25t21.5 -35.5t7 -28.5q0 -20 -28.5 -50t-62 -55t-62 -53t-28.5 -46q0 -9 5 -22.5t8.5 -20.5t14 -24t11.5 -19q76 -137 174 -235t235 -174q2 -1 19 -11.5t24 -14
t20.5 -8.5t22.5 -5q18 0 46 28.5t53 62t55 62t50 28.5q14 0 28.5 -7t35.5 -21.5t25 -17.5q25 -15 53.5 -31t63.5 -35t54 -30q70 -35 76 -53q3 -7 3 -21z"/></svg></span><span style="letter-spacing:0.042px">1-954-227-4382</span></a></td><td><a><span style="letter-spacing:0.044px">alfredo.parker</span></a></td><td><a><span style="letter-spacing:0.147px">Product Management</span></a></td><td></td><td></td><td><a>6</a></td><td><a>1</a></td><td>0</td><td></td></tr>
   <tr class="o" style="height:73.6px"><td><span class="cb"></span></td><td><a>Alison<br>Gianotto</a></td><td><a>Chemical<br>Engineer</a></td><td class="em"><a><span class="ii" style="width:13.00px;height:9.80px;"><svg width="13.00" height="9.80" viewBox="0 64 512 384" preserveAspectRatio="none" fill="#2d6687" stroke="#2d6687" stroke-width="22.0" stroke-linejoin="round" overflow="visible"><path d="M64 112c-8.800 0-16 7.200-16 16v22.100L220.500 291.700c20.700 17 50.400 17 71.100 0L464 150.100V128c0-8.800-7.200-16-16-16H64zM48 212.200V384c0 8.800 7.200 16 16 16H448c8.800 0 16-7.200 16-16V212.200L322 328.800c-38.400 31.500-93.700 31.500-132 0L48 212.200zM0 128C0 92.700 28.700 64 64 64H448c35.300 0 64 28.700 64 64V384c0 35.300-28.700 64-64 64H64c-35.300 0-64-28.700-64-64V128z" /></svg></span><span style="letter-spacing:0.248px">agianotto@grokability.com</span></a></td><td class="ph"><a><span class="ii" style="width:12.80px;height:12.80px;"><svg width="12.80" height="12.80" viewBox="0 -1408 1408 1408" preserveAspectRatio="none" overflow="visible"><path fill="#2d6687" stroke="#2d6687" stroke-width="0.0" stroke-linejoin="round" transform="scale(1,-1)" d="M1408 296q0 -27 -10 -70.5t-21 -68.5q-21 -50 -122 -106q-94 -51 -186 -51q-27 0 -53 3.5t-57.5 12.5t-47 14.5t-55.5 20.5t-49 18q-98 35 -175 83q-127 79 -264 216t-216 264q-48 77 -83 175q-3 9 -18 49t-20.5 55.5t-14.5 47t-12.5 57.5t-3.5 53q0 92 51 186
q56 101 106 122q25 11 68.5 21t70.5 10q14 0 21 -3q18 -6 53 -76q11 -19 30 -54t35 -63.5t31 -53.5q3 -4 17.5 -25t21.5 -35.5t7 -28.5q0 -20 -28.5 -50t-62 -55t-62 -53t-28.5 -46q0 -9 5 -22.5t8.5 -20.5t14 -24t11.5 -19q76 -137 174 -235t235 -174q2 -1 19 -11.5t24 -14
t20.5 -8.5t22.5 -5q18 0 46 28.5t53 62t55 62t50 28.5q14 0 28.5 -7t35.5 -21.5t25 -17.5q25 -15 53.5 -31t63.5 -35t54 -30q70 -35 76 -53q3 -7 3 -21z"/></svg></span><span style="letter-spacing:-0.079px">631-633-3043</span></a></td><td><a><span style="letter-spacing:0.248px">agianotto@grokability.com</span></a></td><td><a><span style="letter-spacing:-0.162px">Client Services</span></a></td><td></td><td></td><td><a>7</a></td><td>0</td><td>0</td><td></td></tr>
   <tr style="height:71.4px"><td><span class="cb"></span></td><td><a>Anjali<br>Koelpin</a></td><td><a>Motor<br>Vehicle<br>Inspector</a></td><td class="em"><a><span class="ii" style="width:13.00px;height:9.80px;"><svg width="13.00" height="9.80" viewBox="0 64 512 384" preserveAspectRatio="none" fill="#2d6687" stroke="#2d6687" stroke-width="22.0" stroke-linejoin="round" overflow="visible"><path d="M64 112c-8.800 0-16 7.200-16 16v22.100L220.500 291.700c20.700 17 50.400 17 71.100 0L464 150.100V128c0-8.800-7.200-16-16-16H64zM48 212.200V384c0 8.800 7.200 16 16 16H448c8.800 0 16-7.200 16-16V212.200L322 328.800c-38.400 31.500-93.700 31.500-132 0L48 212.200zM0 128C0 92.700 28.700 64 64 64H448c35.300 0 64 28.700 64 64V384c0 35.300-28.700 64-64 64H64c-35.300 0-64-28.700-64-64V128z" /></svg></span><span style="letter-spacing:0.062px">epadberg@example.org</span></a></td><td class="ph pd"><a><span class="ii" style="width:12.80px;height:12.80px;"><svg width="12.80" height="12.80" viewBox="0 -1408 1408 1408" preserveAspectRatio="none" overflow="visible"><path fill="#2d6687" stroke="#2d6687" stroke-width="0.0" stroke-linejoin="round" transform="scale(1,-1)" d="M1408 296q0 -27 -10 -70.5t-21 -68.5q-21 -50 -122 -106q-94 -51 -186 -51q-27 0 -53 3.5t-57.5 12.5t-47 14.5t-55.5 20.5t-49 18q-98 35 -175 83q-127 79 -264 216t-216 264q-48 77 -83 175q-3 9 -18 49t-20.5 55.5t-14.5 47t-12.5 57.5t-3.5 53q0 92 51 186
q56 101 106 122q25 11 68.5 21t70.5 10q14 0 21 -3q18 -6 53 -76q11 -19 30 -54t35 -63.5t31 -53.5q3 -4 17.5 -25t21.5 -35.5t7 -28.5q0 -20 -28.5 -50t-62 -55t-62 -53t-28.5 -46q0 -9 5 -22.5t8.5 -20.5t14 -24t11.5 -19q76 -137 174 -235t235 -174q2 -1 19 -11.5t24 -14
t20.5 -8.5t22.5 -5q18 0 46 28.5t53 62t55 62t50 28.5q14 0 28.5 -7t35.5 -21.5t25 -17.5q25 -15 53.5 -31t63.5 -35t54 -30q70 -35 76 -53q3 -7 3 -21z"/></svg></span><span style="letter-spacing:-0.308px">727.555.5296</span></a></td><td><a><span style="letter-spacing:0.13px">nathaniel.pfeffer</span></a></td><td><a><span style="letter-spacing:0.147px">Product Management</span></a></td><td></td><td></td><td><a>3</a></td><td><a>1</a></td><td>0</td><td></td></tr>
   <tr class="o" style="height:72.3px"><td><span class="cb"></span></td><td><a>Anjali<br>Fisher</a></td><td><a>Paving<br>Equipment<br>Operator</a></td><td class="em"><a><span class="ii" style="width:13.00px;height:9.80px;"><svg width="13.00" height="9.80" viewBox="0 64 512 384" preserveAspectRatio="none" fill="#2d6687" stroke="#2d6687" stroke-width="22.0" stroke-linejoin="round" overflow="visible"><path d="M64 112c-8.800 0-16 7.200-16 16v22.100L220.500 291.700c20.700 17 50.400 17 71.100 0L464 150.100V128c0-8.800-7.200-16-16-16H64zM48 212.200V384c0 8.800 7.200 16 16 16H448c8.800 0 16-7.200 16-16V212.200L322 328.800c-38.400 31.500-93.700 31.500-132 0L48 212.200zM0 128C0 92.700 28.700 64 64 64H448c35.300 0 64 28.700 64 64V384c0 35.300-28.700 64-64 64H64c-35.300 0-64-28.700-64-64V128z" /></svg></span><span style="letter-spacing:-0.024px">berge.newell@example.org</span></a></td><td class="ph pd"><a><span class="ii" style="width:12.80px;height:12.80px;"><svg width="12.80" height="12.80" viewBox="0 -1408 1408 1408" preserveAspectRatio="none" overflow="visible"><path fill="#2d6687" stroke="#2d6687" stroke-width="0.0" stroke-linejoin="round" transform="scale(1,-1)" d="M1408 296q0 -27 -10 -70.5t-21 -68.5q-21 -50 -122 -106q-94 -51 -186 -51q-27 0 -53 3.5t-57.5 12.5t-47 14.5t-55.5 20.5t-49 18q-98 35 -175 83q-127 79 -264 216t-216 264q-48 77 -83 175q-3 9 -18 49t-20.5 55.5t-14.5 47t-12.5 57.5t-3.5 53q0 92 51 186
q56 101 106 122q25 11 68.5 21t70.5 10q14 0 21 -3q18 -6 53 -76q11 -19 30 -54t35 -63.5t31 -53.5q3 -4 17.5 -25t21.5 -35.5t7 -28.5q0 -20 -28.5 -50t-62 -55t-62 -53t-28.5 -46q0 -9 5 -22.5t8.5 -20.5t14 -24t11.5 -19q76 -137 174 -235t235 -174q2 -1 19 -11.5t24 -14
t20.5 -8.5t22.5 -5q18 0 46 28.5t53 62t55 62t50 28.5q14 0 28.5 -7t35.5 -21.5t25 -17.5q25 -15 53.5 -31t63.5 -35t54 -30q70 -35 76 -53q3 -7 3 -21z"/></svg></span><span style="letter-spacing:-0.179px">+1.386.521.3405</span></a></td><td><a><span style="letter-spacing:-0.161px">dayana.weissnat</span></a></td><td><a class="sel"><span style="letter-spacing:0.038px">Dept of Silly Walks</span></a></td><td></td><td></td><td><a>6</a></td><td>0</td><td>0</td><td></td></tr>
   <tr style="height:90px"><td><span class="cb"></span></td><td><a>Annabel<br>Smith</a></td><td style="vertical-align:top;padding-top:9.2px"><a>Audio-Visual<br>and<br>Multimedia<br>Collections<br>Specialists</a></td><td class="em"><a><span class="ii" style="width:13.00px;height:9.80px;"><svg width="13.00" height="9.80" viewBox="0 64 512 384" preserveAspectRatio="none" fill="#2d6687" stroke="#2d6687" stroke-width="22.0" stroke-linejoin="round" overflow="visible"><path d="M64 112c-8.800 0-16 7.200-16 16v22.100L220.500 291.700c20.700 17 50.400 17 71.100 0L464 150.100V128c0-8.800-7.200-16-16-16H64zM48 212.200V384c0 8.800 7.200 16 16 16H448c8.800 0 16-7.200 16-16V212.200L322 328.800c-38.400 31.500-93.700 31.500-132 0L48 212.200zM0 128C0 92.700 28.700 64 64 64H448c35.300 0 64 28.700 64 64V384c0 35.300-28.700 64-64 64H64c-35.300 0-64-28.700-64-64V128z" /></svg></span>asmith@example.net</a></td><td class="ph"><a><span class="ii" style="width:12.80px;height:12.80px;"><svg width="12.80" height="12.80" viewBox="0 -1408 1408 1408" preserveAspectRatio="none" overflow="visible"><path fill="#2d6687" stroke="#2d6687" stroke-width="0.0" stroke-linejoin="round" transform="scale(1,-1)" d="M1408 296q0 -27 -10 -70.5t-21 -68.5q-21 -50 -122 -106q-94 -51 -186 -51q-27 0 -53 3.5t-57.5 12.5t-47 14.5t-55.5 20.5t-49 18q-98 35 -175 83q-127 79 -264 216t-216 264q-48 77 -83 175q-3 9 -18 49t-20.5 55.5t-14.5 47t-12.5 57.5t-3.5 53q0 92 51 186
q56 101 106 122q25 11 68.5 21t70.5 10q14 0 21 -3q18 -6 53 -76q11 -19 30 -54t35 -63.5t31 -53.5q3 -4 17.5 -25t21.5 -35.5t7 -28.5q0 -20 -28.5 -50t-62 -55t-62 -53t-28.5 -46q0 -9 5 -22.5t8.5 -20.5t14 -24t11.5 -19q76 -137 174 -235t235 -174q2 -1 19 -11.5t24 -14
t20.5 -8.5t22.5 -5q18 0 46 28.5t53 62t55 62t50 28.5q14 0 28.5 -7t35.5 -21.5t25 -17.5q25 -15 53.5 -31t63.5 -35t54 -30q70 -35 76 -53q3 -7 3 -21z"/></svg></span>555-201-8842</a></td><td><a>annabel.smith</a></td><td><a><span style="letter-spacing:-0.162px">Client Services</span></a></td><td></td><td></td><td><a>4</a></td><td>0</td><td>0</td><td></td></tr>
  </tbody>
 </table>
 </div>
 <div id="sb"><div class="up"></div><div class="thumb"></div><div class="dn"></div></div>
</div>

</body></html>
